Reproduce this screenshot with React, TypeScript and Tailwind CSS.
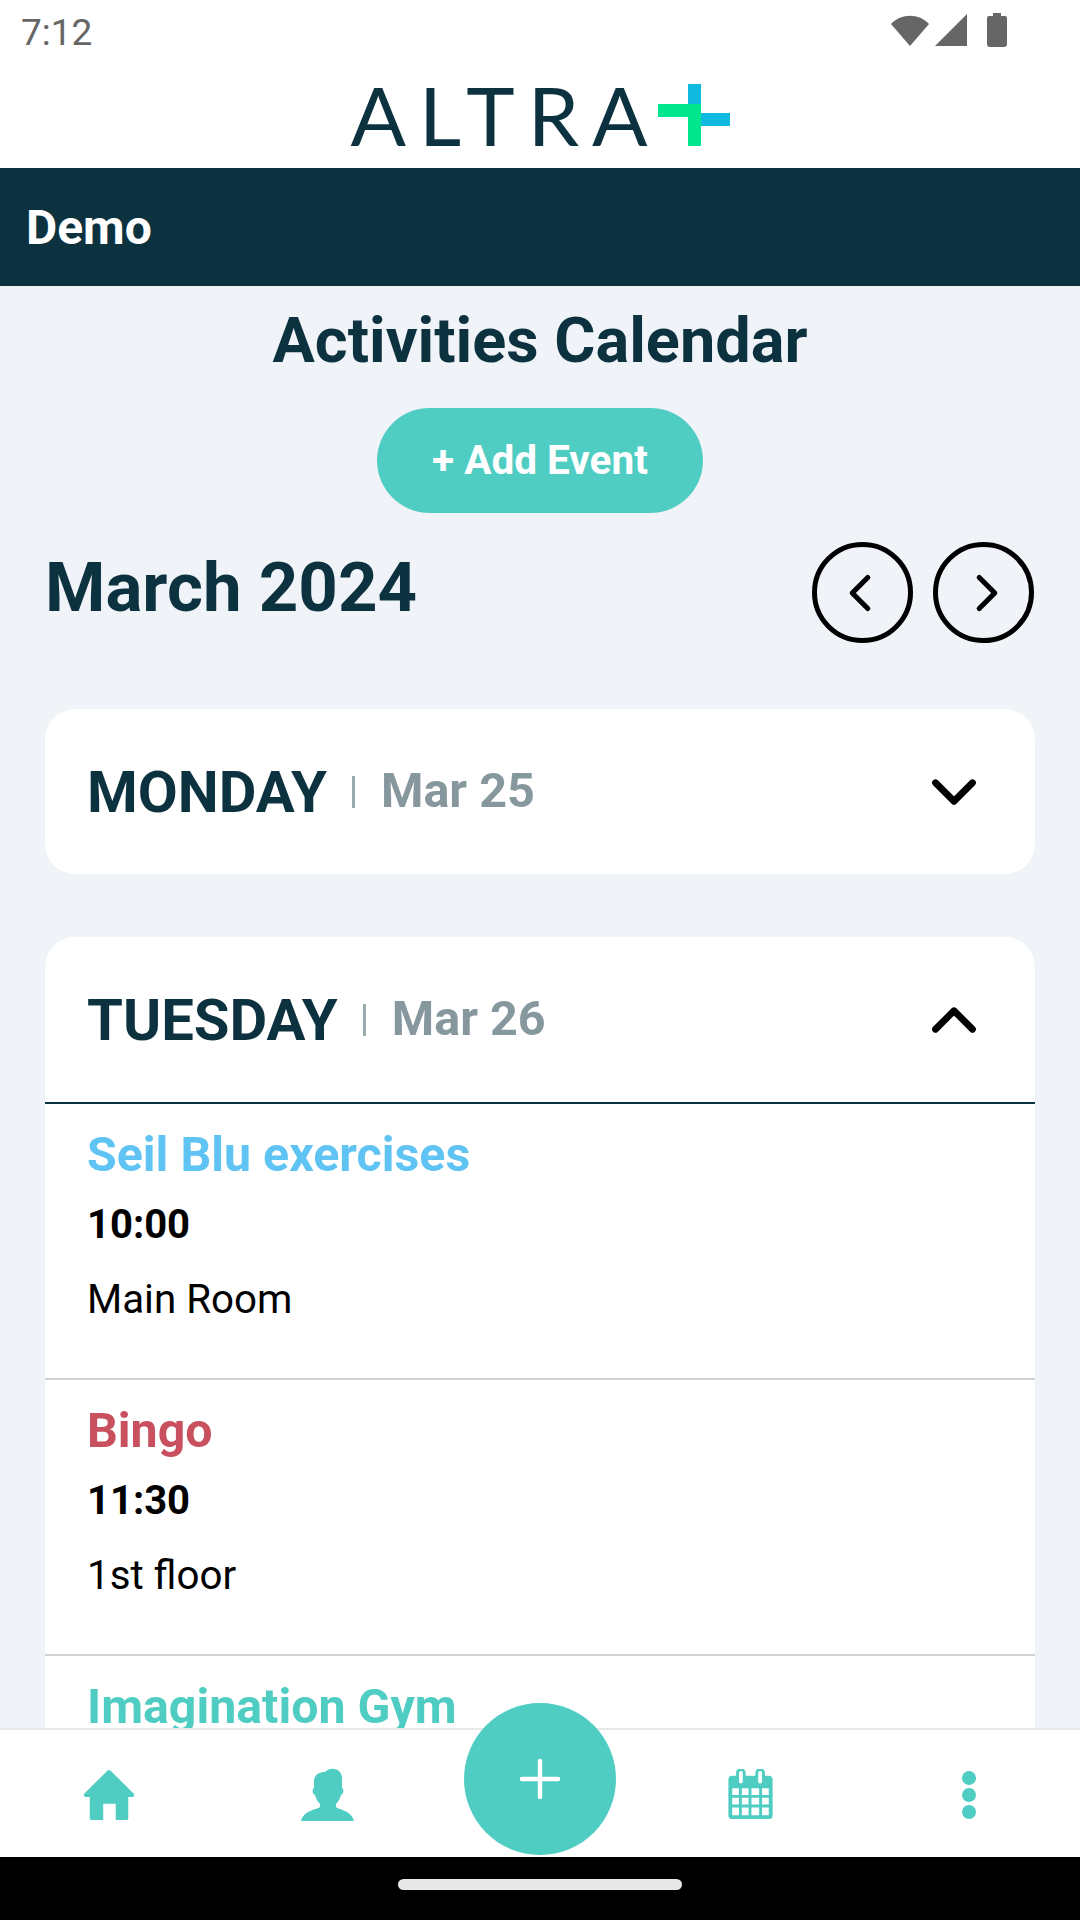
import React from 'react';
import { ChevronDown, ChevronLeft, ChevronRight, ChevronUp, Plus } from 'lucide-react';

const events = [
  { title: 'Seil Blu exercises', time: '10:00', place: 'Main Room', color: 'text-[#5fc4f3]' },
  { title: 'Bingo', time: '11:30', place: '1st floor', color: 'text-[#c8505f]' },
  { title: 'Imagination Gym', color: 'text-[#50cdc3]' },
];

const DayHeader = ({ day, date, open }: { day: string; date: string; open?: boolean }) => (
  <div className={`flex items-center pl-[42px] pr-[44px] ${open ? 'h-[167px] border-b-2 border-[#0d323f]' : 'h-[165px]'}`}>
    <span className="text-[58px] font-bold text-[#0d323f] leading-none">{day}</span>
    <span className="w-[3px] h-[32px] bg-[#9aa9ae] ml-[25px] mr-[26px]" />
    <span className="text-[48.5px] font-bold text-[#86979e] leading-none">{date}</span>
    <span className="ml-auto">
      {open ? <ChevronUp size={74} strokeWidth={2.2} color="#000" /> : <ChevronDown size={74} strokeWidth={2.2} color="#000" />}
    </span>
  </div>
);

const StatusIcons = () => (
  <div className="flex items-center gap-[4px] mr-[72px]">
    <svg width="40" height="34" viewBox="0 0 40 34"><path d="M1 11 C11 0 29 0 39 11 L20 33 Z" fill="#666" /></svg>
    <svg width="34" height="34" viewBox="0 0 34 34"><path d="M33 1 V33 H1 Z" fill="#666" /></svg>
    <svg width="22" height="34" viewBox="0 0 22 34" className="ml-[14px]"><path d="M7 0 H15 V3 H19 Q21 3 21 5 V31 Q21 34 18 34 H4 Q1 34 1 31 V5 Q1 3 3 3 H7 Z" fill="#666" /></svg>
  </div>
);

const Logo = () => (
  <div className="flex items-start justify-center h-[108px]">
    <span className="font-['Lato'] font-normal text-[82px] leading-[108px] tracking-[13px] text-[#0d323f]">ALTRA</span>
    <svg width="72" height="62" viewBox="0 0 72 62" className="-ml-[3px] mt-[24px]">
      <rect x="30" y="0" width="13" height="30" fill="#10b9e0" />
      <rect x="43" y="29" width="29" height="13" fill="#10b9e0" />
      <rect x="0" y="20" width="43" height="13" fill="#00e68e" />
      <rect x="30" y="20" width="13" height="42" fill="#00e68e" />
    </svg>
  </div>
);

const navColor = '#50cdc3';

export default function App() {
  return (
    <div className="relative flex flex-col w-[1080px] h-[1920px] overflow-hidden bg-[#f0f3f8] font-['Roboto',sans-serif]">
      <div className="bg-white">
        <div className="flex items-center justify-between h-[60px] pl-[21px]">
          <span className="text-[37px] text-[#666] leading-none pt-[4px]">7:12</span>
          <StatusIcons />
        </div>
        <Logo />
      </div>
      <div className="flex items-center h-[118px] bg-[#0d323f] pl-[26px]">
        <span className="text-[48px] font-bold text-white pt-[2px]">Demo</span>
      </div>

      <div className="flex-1 min-h-0 overflow-hidden">
        <h1 className="mt-[20px] text-center text-[63px] leading-[70px] font-bold text-[#0d323f]">Activities Calendar</h1>
        <div className="flex justify-center mt-[32px]">
          <button className="w-[326px] h-[105px] rounded-full bg-[#50cdc3] text-[40.5px] font-bold text-white">+ Add Event</button>
        </div>
        <div className="flex items-center justify-between mt-[29px] pl-[45px] pr-[46px]">
          <span className="text-[69px] font-bold text-[#0d323f] leading-none -mt-[10px]">March 2024</span>
          <div className="flex gap-[20px]">
            <button className="flex items-center justify-center w-[101px] h-[101px] rounded-full border-[5px] border-black"><ChevronLeft size={62} strokeWidth={2} color="#000" className="-ml-[6px]" /></button>
            <button className="flex items-center justify-center w-[101px] h-[101px] rounded-full border-[5px] border-black"><ChevronRight size={62} strokeWidth={2} color="#000" className="ml-[6px]" /></button>
          </div>
        </div>

        <div className="mt-[66px] mx-[45px] bg-white rounded-[30px]">
          <DayHeader day="MONDAY" date="Mar 25" />
        </div>

        <div className="mt-[63px] mx-[45px] bg-white rounded-t-[30px]">
          <DayHeader day="TUESDAY" date="Mar 26" open />
          {events.map((e) => (
            <div key={e.title} className="h-[276px] border-b-2 border-[#cfd3d6] px-[42px] pt-[26px]">
              <div className={`text-[48.3px] font-bold leading-[50px] ${e.color}`}>{e.title}</div>
              {e.time && <div className="mt-[22px] text-[40px] font-bold text-black leading-[46px]">{e.time}</div>}
              {e.place && <div className="mt-[29px] text-[40.3px] text-black leading-[46px]">{e.place}</div>}
            </div>
          ))}
        </div>
      </div>

      <nav className="grid grid-cols-5 h-[129px] bg-white border-t-2 border-[#e8e9ea] pt-[38px]">
        <div className="flex justify-center">
          <svg width="52" height="54" viewBox="0 0 54 54" fill={navColor} className="ml-[2px]">
            <path d="M27 1 Q28 1 29 2 L53 26 Q54 29 51 29 H47 V50 Q47 53 45 53 H34 V36 H21 V53 H9 Q7 53 7 50 V29 H3 Q0 29 1 26 L25 2 Q26 1 27 1 Z" />
          </svg>
        </div>
        <div className="flex justify-center">
          <svg width="54" height="54" viewBox="0 0 54 54" fill={navColor} className="ml-[8px]">
            <path d="M30 1 C37 0 42 5 41 13 L41 20 C43 21 43 26 40 27 C39 31 37 34 35 36 V39 C38 42 50 42 53 53 H0 C3 42 15 42 19 39 V36 C17 34 15 31 14 27 C11 26 11 21 13 20 L13 12 C14 6 19 4 24 4 C26 2 28 1 30 1 Z" />
          </svg>
        </div>
        <div />
        <div className="flex justify-center">
          <svg width="45" height="50" viewBox="0 0 46 52" fill={navColor} className="-ml-[11px] mt-[1px]">
            <path fillRule="evenodd" d="M4 7 H8 V4 A5 5 0 0 1 18 4 V7 H28 V4 A5 5 0 0 1 38 4 V7 H42 Q46 7 46 11 V48 Q46 52 42 52 H4 Q0 52 0 48 V11 Q0 7 4 7 Z M11 4 V13 A2 2 0 0 0 15 13 V4 A2 2 0 0 0 11 4 Z M31 4 V13 A2 2 0 0 0 35 13 V4 A2 2 0 0 0 31 4 Z M4 20 V27 H11 V20 Z M14 20 V27 H21 V20 Z M24 20 V27 H32 V20 Z M35 20 V27 H42 V20 Z M4 30 V37 H11 V30 Z M14 30 V37 H21 V30 Z M24 30 V37 H32 V30 Z M35 30 V37 H42 V30 Z M4 40 V48 H11 V40 Z M14 40 V48 H21 V40 Z M24 40 V48 H32 V40 Z M35 40 V48 H42 V40 Z" />
          </svg>
        </div>
        <div className="flex flex-col items-center gap-[3px] pt-[3px] pr-[7px]">
          <span className="w-[14px] h-[14px] rounded-full bg-[#50cdc3]" />
          <span className="w-[14px] h-[14px] rounded-full bg-[#50cdc3]" />
          <span className="w-[14px] h-[14px] rounded-full bg-[#50cdc3]" />
        </div>
      </nav>

      <div className="flex items-center justify-center h-[63px] bg-black">
        <div className="w-[284px] h-[11px] rounded-full bg-[#e8e8e8] -mt-[8px]" />
      </div>

      <button className="absolute left-[464px] top-[1703px] flex items-center justify-center w-[152px] h-[152px] rounded-full bg-[#50cdc3]">
        <Plus size={62} strokeWidth={1.7} color="#fff" />
      </button>
    </div>
  );
}
